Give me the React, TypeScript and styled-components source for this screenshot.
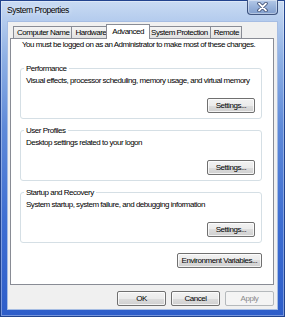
import React from "react";
import styled, { createGlobalStyle } from "styled-components";

const GlobalStyle = createGlobalStyle`
  html, body { margin: 0; padding: 0; background: #ffffff; }
  body {
    font-family: "Liberation Sans", Arial, sans-serif;
  }
  * { box-sizing: border-box; }
`;

const Window = styled.div`
  width: 285px;
  height: 317px;
  display: flex;
  flex-direction: column;
  padding: 0 7px 7px;
  background: linear-gradient(
    180deg,
    #cadcf3 0%,
    #b6cdee 6%,
    #8fb1e5 18%,
    #5f8ad9 40%,
    #3e6ed2 70%,
    #2d5dc9 100%
  );
  box-shadow: inset 0 0 0 1px #21438e, inset 0 0 0 2px rgba(255, 255, 255, 0.35);
`;

const TitleBar = styled.div`
  height: 21px;
  display: flex;
  align-items: flex-start;
  justify-content: space-between;
`;

const Title = styled.span`
  font-size: 8.5px;
  letter-spacing: -0.45px;
  line-height: 20px;
  color: #000;
  text-shadow: 0 0 5px rgba(255, 255, 255, 0.95);
`;

const CloseButton = styled.div`
  width: 31px;
  height: 15px;
  display: flex;
  align-items: center;
  justify-content: center;
  border: 1px solid rgba(30, 50, 95, 0.75);
  border-top: none;
  border-radius: 0 0 4px 4px;
  background: linear-gradient(180deg, #b4c9e8 0%, #98b2da 50%, #819ecd 100%);
  box-shadow: inset 0 0 0 1px rgba(255, 255, 255, 0.4);
`;

const Client = styled.div`
  flex: 1;
  display: flex;
  flex-direction: column;
  background: #f0f0f0;
  border: 1px solid #a6bde3;
  padding: 2px 3px 3px 2px;
`;

const TabRow = styled.div`
  height: 14px;
  display: flex;
  align-items: flex-end;
  padding-left: 3px;
`;

const Tab = styled.div<{ $active?: boolean }>`
  position: relative;
  display: flex;
  align-items: center;
  justify-content: center;
  font-size: 8px;
  letter-spacing: -0.48px;
  color: #000;
  white-space: nowrap;
  border: 1px solid #898c95;
  border-bottom: none;
  margin-left: -1px;
  &:first-child { margin-left: 0; }
  ${({ $active }) =>
    $active
      ? `
    z-index: 1;
    height: 15px;
    margin: 0 -2px -1px -3px;
    padding: 0 5px 2px;
    background: #ffffff;
  `
      : `
    height: 12px;
    padding: 0 2px 0 3px;
    background: linear-gradient(180deg, #f4f4f4 0%, #ebebeb 50%, #e1e1e1 100%);
  `}
`;

const Panel = styled.div`
  flex: 1;
  display: flex;
  flex-direction: column;
  background: #ffffff;
  border: 1px solid #898c95;
  padding: 1px 11px 0 9px;
`;

const Text = styled.div`
  font-size: 8px;
  letter-spacing: -0.48px;
  line-height: 10px;
  color: #000;
  white-space: nowrap;
`;

const Notice = styled(Text)`
  margin-left: 2px;
`;

const GroupBox = styled.div<{ $first?: boolean }>`
  display: flex;
  flex-direction: column;
  height: 51px;
  margin-top: ${({ $first }) => ($first ? "18px" : "11px")};
  border: 1px solid #d5dfe5;
  border-radius: 3px;
  padding: 0 6px 5px 5px;
`;

const GroupTitle = styled.span`
  align-self: flex-start;
  margin: -6px 0 0 -2px;
  padding: 0 2px;
  background: #ffffff;
  font-size: 8px;
  letter-spacing: -0.48px;
  line-height: 11px;
  color: #000;
  white-space: nowrap;
`;

const GroupText = styled(Text)`
  margin-top: 2px;
`;

const Button = styled.button<{ $w: number; $disabled?: boolean }>`
  width: ${({ $w }) => $w}px;
  height: 15px;
  padding: 0;
  margin: 0;
  font-family: inherit;
  font-size: 8px;
  letter-spacing: -0.45px;
  line-height: 13px;
  border-radius: 2px;
  ${({ $disabled }) =>
    $disabled
      ? `
    color: #8a8a8a;
    border: 1px solid #b5b9bc;
    background: #f4f4f4;
  `
      : `
    color: #000;
    border: 1px solid #707070;
    background: linear-gradient(180deg, #f2f2f2 0%, #ebebeb 50%, #dddddd 50%, #cfcfcf 100%);
    box-shadow: inset 0 0 0 1px rgba(255, 255, 255, 0.75);
  `}
`;

const GroupButton = styled(Button)`
  align-self: flex-end;
  margin-top: 12px;
`;

const EnvButton = styled(Button)`
  align-self: flex-end;
  margin-top: 10px;
`;

const ButtonRow = styled.div`
  height: 15px;
  margin-top: 6px;
  display: flex;
  justify-content: flex-end;
  gap: 5px;
`;

const groups = [
  {
    title: "Performance",
    text: "Visual effects, processor scheduling, memory usage, and virtual memory",
  },
  { title: "User Profiles", text: "Desktop settings related to your logon" },
  {
    title: "Startup and Recovery",
    text: "System startup, system failure, and debugging information",
  },
];

const tabs = ["Computer Name", "Hardware", "Advanced", "System Protection", "Remote"];

export default function App() {
  return (
    <>
      <GlobalStyle />
      <Window>
        <TitleBar>
          <Title>System Properties</Title>
          <CloseButton>
            <svg width="11" height="10" viewBox="0 0 11 10">
              <path
                d="M2 1.5 L9 8.5 M9 1.5 L2 8.5"
                stroke="#34446a"
                strokeWidth="3.4"
                strokeLinecap="round"
              />
              <path
                d="M2 1.5 L9 8.5 M9 1.5 L2 8.5"
                stroke="#ffffff"
                strokeWidth="1.8"
                strokeLinecap="round"
              />
            </svg>
          </CloseButton>
        </TitleBar>
        <Client>
          <TabRow>
            {tabs.map((t) => (
              <Tab key={t} $active={t === "Advanced"}>
                {t}
              </Tab>
            ))}
          </TabRow>
          <Panel>
            <Notice>
              You must be logged on as an Administrator to make most of these changes.
            </Notice>
            {groups.map((g, i) => (
              <GroupBox key={g.title} $first={i === 0}>
                <GroupTitle>{g.title}</GroupTitle>
                <GroupText>{g.text}</GroupText>
                <GroupButton $w={48}>Settings...</GroupButton>
              </GroupBox>
            ))}
            <EnvButton $w={85}>Environment Variables...</EnvButton>
          </Panel>
          <ButtonRow>
            <Button $w={49}>OK</Button>
            <Button $w={49}>Cancel</Button>
            <Button $w={49} $disabled>
              Apply
            </Button>
          </ButtonRow>
        </Client>
      </Window>
    </>
  );
}
